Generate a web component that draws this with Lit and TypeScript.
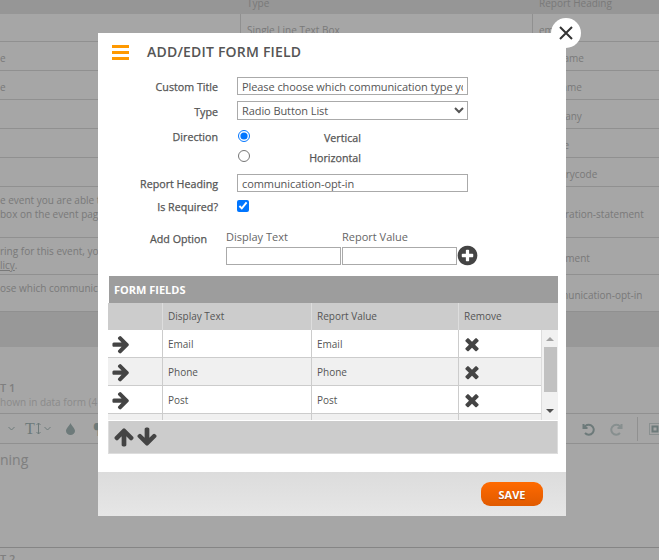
import { LitElement, html, css, svg } from "lit";
import { customElement } from "lit/decorators.js";

const P = {
  times: "M1490 1322q0 40-28 68l-136 136q-28 28-68 28t-68-28l-294-294-294 294q-28 28-68 28t-68-28l-136-136q-28-28-28-68t28-68l294-294-294-294q-28-28-28-68t28-68l136-136q28-28 68-28t68 28l294 294 294-294q28-28 68-28t68 28l136 136q28 28 28 68t-28 68l-294 294 294 294q28 28 28 68z",
  right: "M1600 960q0 54-37 91l-651 651q-39 37-91 37-51 0-90-37l-75-75q-38-38-38-91t38-91l293-293h-704q-52 0-84.5-37.5t-32.5-90.5v-128q0-53 32.5-90.5t84.5-37.5h704l-293-294q-38-36-38-90t38-90l75-75q38-38 90-38 53 0 91 38l651 651q37 35 37 90z",
  up: "M1675 971q0 51-37 90l-75 75q-38 38-91 38-54 0-90-38l-294-293v704q0 52-37.5 84.5t-90.5 32.5h-128q-53 0-90.5-32.5t-37.5-84.5v-704l-294 293q-36 38-90 38t-90-38l-75-75q-38-38-38-90 0-53 38-91l651-651q35-37 90-37 54 0 91 37l651 651q37 39 37 91z",
  down: "M1675 832q0 53-37 90l-651 652q-39 37-91 37-53 0-90-37l-651-652q-38-36-38-90 0-53 38-91l74-75q39-37 91-37 53 0 90 37l294 294v-704q0-52 38-90t90-38h128q52 0 90 38t38 90v704l294-294q37-37 90-37 52 0 91 37l75 75q37 39 37 91z",
  plus: "M1344 960v-128q0-26-19-45t-45-19h-256v-256q0-26-19-45t-45-19h-128q-26 0-45 19t-19 45v256h-256q-26 0-45 19t-19 45v128q0 26 19 45t45 19h256v256q0 26 19 45t45 19h128q26 0 45-19t19-45v-256h256q26 0 45-19t19-45zm320-64q0 209-103 385.5t-279.5 279.5-385.5 103-385.5-103-279.5-279.5-103-385.5 103-385.5 279.5-279.5 385.5-103 385.5 103 279.5 279.5 103 385.5z",
};
const fa = (d: string, size: number) => html`<svg class="fa" width=${size} height=${size} viewBox="0 0 1792 1792">${svg`<path d=${d} fill="#444"></path>`}</svg>`;
const chev = html`<svg class="chev" width="7" height="5" viewBox="0 0 7 5" fill="none" stroke="#a8bcbc"><path d="M.5 1l3 3 3-3"></path></svg>`;

const bgRows: [string[], string, string, number][] = [
  [[""], "Single Line Text Box", "email", 28],
  [["e"], "", "firstname", 29],
  [["e"], "", "lastname", 29],
  [[""], "", "company", 29],
  [[""], "", "phone", 29],
  [[""], "", "countrycode", 29],
  [["e event you are able to", "box on the event page", "\u00a0"], "", "registration-statement", 51],
  [["ring for this event, you", "licy."], "", "agreement", 37],
  [["ose which communication", "\u00a0"], "", "communication-opt-in", 37],
];

const fields = ["Email", "Phone", "Post"];

@customElement("app-root")
export class AppRoot extends LitElement {
  static styles = css`
    :host { display: block; position: relative; width: 659px; height: 560px; overflow: hidden; font-family: "Open Sans", sans-serif; color: #555; background: #fff; }
    * { box-sizing: border-box; }
    .page { font-size: 10px; color: #bbb; }
    .bghead { display: grid; grid-template-columns: 241px 292px 1fr; height: 14px; background: #e6e6e6; overflow: hidden; }
    .bghead div { padding-left: 6px; line-height: 12px; margin-top: -3px; }
    .bgrow { display: grid; grid-template-columns: 241px 292px 1fr; border-bottom: 1px solid #ddd; }
    .bgrow > div { display: flex; flex-direction: column; justify-content: center; line-height: 14px; padding: 4px 0 0 6px; border-right: 1px solid #ddd; white-space: nowrap; overflow: hidden; }
    .bgrow > div:first-child { padding-left: 0; }
    .bgrow > div:last-child { border-right: 0; }
    .lnk { text-decoration: underline; }
    .band { height: 35px; background: #eaeaea; }
    .sec { padding-top: 34px; font-size: 10px; line-height: 14px; }
    .sec b { display: block; font-weight: 600; color: #c4c4c4; font-size: 11px; }
    .sec span { display: block; color: #d6d6d6; }
    .sec.next { padding-top: 4px; }
    .tools { display: flex; align-items: center; height: 31px; margin-top: 4px; border-top: 1px solid #ddd; border-bottom: 1px solid #ddd; color: #a8bcbc; }
    .t1 { width: 25px; padding-left: 8px; display: flex; }
    .t2 { width: 41px; display: flex; align-items: center; gap: 1px; font: 16px/1 "Liberation Serif", serif; }
    .t2 .chev { margin-left: 2px; }
    .t3 { width: 27px; display: flex; font: 700 14px/1 "Open Sans", sans-serif; }
    .tspace { flex: 1; }
    .tgap { width: 15px; }
    .tdiv { width: 1px; height: 24px; background: #ddd; margin: 0 11px 0 13px; }
    .tools svg { flex-shrink: 0; }
    .tlast { margin-right: -2px; }
    .ning { font-size: 14px; color: #c4c4c4; padding-top: 6px; height: 104px; border-bottom: 1px solid #ccc; }
    .overlay { position: absolute; inset: 0; background: rgba(0,0,0,.35); }
    .modal { position: absolute; left: 98px; top: 33px; width: 468px; height: 483px; background: #fff; display: flex; flex-direction: column; }
    .close { position: absolute; right: -15px; top: -15px; width: 30px; height: 30px; border-radius: 50%; background: #fff; display: flex; align-items: center; justify-content: center; }
    .head { display: flex; align-items: center; height: 38px; padding-left: 14px; gap: 18px; }
    .burger { display: flex; flex-direction: column; gap: 3px; width: 17px; }
    .burger i { display: block; height: 3px; background: #f90; }
    h2 { margin: 0; font-size: 14px; font-weight: 600; color: #555; letter-spacing: .2px; line-height: 38px; }
    .form { padding-top: 6px; flex: 1; }
    .row { display: flex; gap: 19px; align-items: center; margin-bottom: 6px; }
    .row.dirrow { align-items: flex-start; margin-bottom: 8px; }
    label { width: 120px; text-align: right; font-size: 10.7px; font-weight: 400; color: #555; -webkit-text-stroke: .25px #555; padding-top: 2px; }
    .dirlab { padding-top: 4px; }
    .reqlab { padding-top: 2px; }
    input[type=text] { width: 231px; height: 18px; border: 1px solid #aaa; font: 11px "Open Sans", sans-serif; letter-spacing: -.08px; color: #555; padding: 0 4px; margin: 0; outline: 0; border-radius: 0; }
    select { width: 231px; height: 19px; border: 1px solid #aaa; font: 11px "Open Sans", sans-serif; letter-spacing: -.08px; color: #555; background: #fff; margin: 0; padding: 0; border-radius: 0; }
    .dirs { display: flex; flex-direction: column; width: 124px; }
    .dir { display: flex; justify-content: space-between; align-items: center; height: 20px; font-size: 10.7px; font-weight: 400; -webkit-text-stroke: .25px #555; }
    .dir input { margin: 0 0 1px 1px; width: 12px; height: 12px; }
    .dir span { padding-top: 4px; }
    .check { margin: 0; width: 12px; height: 12px; align-self: flex-start; margin-top: 2px; }
    .adds { display: flex; gap: 1px; align-items: flex-end; }
    .adds .col { display: flex; flex-direction: column; font-size: 11px; color: #666; line-height: 14px; gap: 3px; }
    .adds input[type=text] { width: 115px; height: 18px; }
    .adds .fa { margin-left: -2px; margin-bottom: -2px; }
    .addrow { display: flex; gap: 19px; margin-top: 16px; }
    .addlab { width: 109px; text-align: right; padding-top: 2px; font-size: 10.7px; -webkit-text-stroke: .25px #555; }
    .grid { margin: 11px 8px 0 10px; }
    .gt { background: #9d9d9d; color: #fff; font-size: 11px; font-weight: 700; height: 27px; line-height: 27px; padding-left: 5px; margin-left: 1px; }
    .cols { display: grid; grid-template-columns: 55px 149px 147px 1fr; background: #ccc; height: 27px; font-size: 10px; color: #555; }
    .cols div { padding-left: 5px; line-height: 27px; border-right: 1px solid #ddd; }
    .cols div:last-child { border-right: 0; }
    .body { display: flex; height: 90px; }
    .rows { flex: 1; overflow: hidden; }
    .r { display: grid; grid-template-columns: 55px 149px 147px 1fr; height: 28px; font-size: 10px; border-bottom: 1px solid #ccc; background: #fff; align-items: stretch; }
    .r.alt { background: #f0f0f0; }
    .r > div { border-right: 1px solid #ccc; padding-left: 5px; display: flex; align-items: center; color: #555; }
    .r > div.ico { padding-left: 3px; }
    .r > div:last-child { border-right: 0; }
    .sb { width: 17px; background: #f1f1f1; border-left: 1px solid #ddd; display: flex; flex-direction: column; align-items: center; padding: 7px 1px 0 1px; }
    .up { width: 0; height: 0; border: 4px solid transparent; border-top: 0; border-bottom: 4px solid #a3a3a3; }
    .thumb { width: 13px; height: 45px; background: #c1c1c1; margin-top: 6px; }
    .dn { width: 0; height: 0; border: 4px solid transparent; border-bottom: 0; border-top: 4px solid #505050; margin-top: 17px; }
    .pager { height: 33px; background: #ccc; border: 1px solid #ddd; border-top: 0; display: flex; align-items: center; gap: 1px; padding: 0 0 0 4px; margin-top: 1px; }
    .foot { height: 44px; background: linear-gradient(#dcdcdc, #e6e6e6); display: flex; align-items: center; justify-content: flex-end; padding-right: 23px; }
    .save { width: 62px; height: 24px; border-radius: 9px; border: 0; background: linear-gradient(#ff6a00, #e05a00); color: #fff; font: 700 11px "Open Sans", sans-serif; text-shadow: 0 1px 1px rgba(0,0,0,.3); padding: 0; }
  `;

  render() {
    return html`
      <div class="page">
        <div class="bghead"><div></div><div>Type</div><div>Report Heading</div></div>
        ${bgRows.map(([a, b, c, h]) => html`
          <div class="bgrow" style="height:${h}px">
            <div>${a.map((t) => t === "licy." ? html`<span><span class="lnk">licy</span>.</span>` : html`<span>${t}</span>`)}</div>
            <div>${b}</div>
            <div>${c}</div>
          </div>`)}
        <div class="band"></div>
        <div class="sec"><b>T 1</b><span>hown in data form (4</span></div>
        <div class="tools">
          <span class="t1">${chev}</span>
          <span class="t2">T<svg width="5" height="13" viewBox="0 0 5 13" fill="none" stroke="#a8bcbc"><path d="M2.500 1v11M.5 3l2-2 2 2M.5 10l2 2 2-2"></path></svg>${chev}</span>
          <span class="t3"><svg width="9" height="12" viewBox="0 0 9 12" fill="#a8bcbc"><path d="M4.500 0C5.500 3 9 5 9 8a4.500 4 0 0 1-9 0C0 5 3.500 3 4.500 0z"></path></svg></span>
          <span class="t3">¶</span>
          <span class="tspace"></span>
          <svg width="14" height="14" viewBox="0 0 14 14" fill="none" stroke="#a8bcbc" stroke-width="2"><path d="M2.500 2v4h4M3 6a5 5 0 1 1 1 5"></path></svg>
          <span class="tgap"></span>
          <svg width="14" height="14" viewBox="0 0 14 14" fill="none" stroke="#d0dcdc" stroke-width="2"><path d="M11.500 2v4h-4M11 6a5 5 0 1 0-1 5"></path></svg>
          <span class="tdiv"></span>
          <svg class="tlast" width="12" height="12" viewBox="0 0 12 12" fill="none" stroke="#a8bcbc"><rect x="3.500" y="3.500" width="5" height="5" stroke-width="2"></rect><rect x=".5" y=".5" width="11" height="11" stroke-dasharray="1 1"></rect></svg>
        </div>
        <div class="ning">ning</div>
        <div class="sec next"><b>T 2</b></div>
      </div>
      <div class="overlay"></div>
      <div class="modal">
        <div class="close">
          <svg width="16" height="16" viewBox="0 0 16 16" fill="none" stroke="#333" stroke-width="2"><path d="M2 2l12 12M14 2L2 14"></path></svg>
        </div>
        <div class="head">
          <div class="burger"><i></i><i></i><i></i></div>
          <h2>ADD/EDIT FORM FIELD</h2>
        </div>
        <div class="form">
          <div class="row"><label>Custom Title</label><input type="text" value="Please choose which communication type you would prefer"></div>
          <div class="row"><label>Type</label><select><option>Radio Button List</option></select></div>
          <div class="row dirrow">
            <label class="dirlab">Direction</label>
            <div class="dirs">
              <div class="dir"><input type="radio" name="d" checked><span>Vertical</span></div>
              <div class="dir"><input type="radio" name="d"><span>Horizontal</span></div>
            </div>
          </div>
          <div class="row"><label>Report Heading</label><input type="text" value="communication-opt-in"></div>
          <div class="row"><label class="reqlab">Is Required?</label><input class="check" type="checkbox" checked></div>
          <div class="addrow">
            <div class="addlab">Add Option</div>
            <div class="adds">
              <div class="col"><span>Display Text</span><input type="text"></div>
              <div class="col"><span>Report Value</span><input type="text"></div>
              ${fa(P.plus, 23)}
            </div>
          </div>
          <div class="grid">
            <div class="gt">FORM FIELDS</div>
            <div class="cols"><div></div><div>Display Text</div><div>Report Value</div><div>Remove</div></div>
            <div class="body">
              <div class="rows">
                ${fields.map((f, i) => html`
                  <div class="r ${i === 1 ? "alt" : ""}">
                    <div class="ico">${fa(P.right, 20)}</div><div>${f}</div><div>${f}</div><div class="ico">${fa(P.times, 20)}</div>
                  </div>`)}
                <div class="r alt"><div class="ico">${fa(P.up, 20)}</div><div></div><div></div><div></div></div>
              </div>
              <div class="sb"><i class="up"></i><i class="thumb"></i><i class="dn"></i></div>
            </div>
            <div class="pager">${fa(P.up, 22)}${fa(P.down, 22)}</div>
          </div>
        </div>
        <div class="foot"><button class="save">SAVE</button></div>
      </div>
    `;
  }
}
